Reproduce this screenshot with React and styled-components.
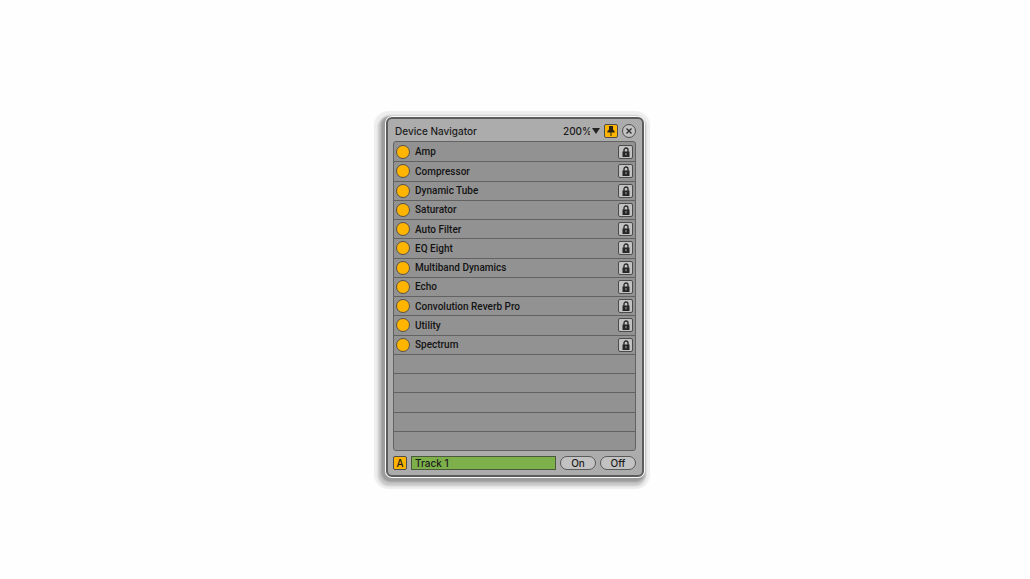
import React from "react";
import styled, { createGlobalStyle } from "styled-components";

const GlobalStyle = createGlobalStyle`
  *, *::before, *::after { box-sizing: border-box; }
  body { margin: 0; background: #fefefe; }
  button, input, select { margin: 0; font: inherit; color: inherit; }
`;

const Page = styled.main`
  display: flex;
  justify-content: center;
  align-items: flex-start;
  min-height: 100vh;
  padding: 117px 16px 32px;
  font: 500 10px/14px Inter, "Liberation Sans", sans-serif;
  color: #1c1c1c;
`;

const Panel = styled.section`
  width: 100%;
  max-width: 258px;
  padding: 4px 6px 5px 5px;
  border: 2px solid #5c5c5c;
  border-radius: 6px;
  background: #acacac;
  box-shadow:
    0 0 0 1px #f8f8f8,
    -2px 2px 2px 3px #9c9c9c,
    -3px 4px 2px 5px #c8c8c8,
    -3px 3px 1px 9px #eeeeee;
`;

const Header = styled.header`
  display: flex;
  align-items: center;
  height: 16px;
  margin-bottom: 2px;
  padding-left: 2px;
`;

const Title = styled.h1`
  flex: 1;
  margin: 0;
  font: inherit;
`;

const ZoomField = styled.label`
  display: flex;
  align-items: center;
  gap: 2px;
  margin-right: 4px;
`;

const ZoomSelect = styled.select`
  appearance: none;
  width: 27px;
  padding: 0;
  border: 0;
  background: none;
`;

const SquareButton = styled.button`
  display: grid;
  place-items: center;
  flex: none;
  width: ${(p) => p.$width || 14}px;
  height: 14px;
  padding: 0;
  border: 1px solid #4c4c4c;
  border-radius: 2px;
  background: ${(p) => (p.$active ? "#ffb400" : "#c2c2c2")};
  line-height: 12px;
`;

const CloseButton = styled(SquareButton)`
  margin-left: 4px;
  border-radius: 50%;
`;

const DeviceList = styled.ul`
  display: grid;
  grid-template-rows: repeat(16, 1fr);
  min-height: 310px;
  margin: 0;
  padding: 0;
  border: 1px solid #626262;
  border-radius: 3px;
  background: #929292;
  font-family: Roboto, "Liberation Sans", sans-serif;
  line-height: 15px;
  color: #141414;
  list-style: none;
`;

const DeviceRow = styled.li`
  display: flex;
  align-items: center;
  padding: 0 2px;
  & + & { border-top: 1px solid #626262; }
`;

const DeviceLabel = styled.label`
  display: flex;
  flex: 1;
  align-items: center;
  gap: 5px;
`;

const DeviceToggle = styled.input`
  appearance: none;
  width: 14px;
  height: 14px;
  border: 1px solid #55524a;
  border-radius: 50%;
  background: #a0a0a0;
  &:checked { background: #ffb400; }
`;

const Footer = styled.footer`
  display: flex;
  align-items: center;
  gap: 4px;
  margin-top: 5px;
`;

const TrackInput = styled.input`
  flex: 1;
  min-width: 0;
  height: 14px;
  padding: 0 3px;
  border: 1px solid #4a5a3a;
  border-radius: 0;
  background: #7db04b;
`;

const PillButton = styled.button`
  width: 36px;
  height: 14px;
  padding: 0;
  border: 1px solid #5a5a5a;
  border-radius: 7px;
  background: #c2c2c2;
  line-height: 12px;
`;

const LockIcon = () => (
  <svg width="8" height="10" viewBox="0 0 8 10" aria-hidden="true">
    <path d="M2 5V3a2 2 0 0 1 4 0v2" fill="none" stroke="#262626" strokeWidth="1.3" />
    <path d="M.5 4.5h7V10h-7z" fill="#262626" />
    <path d="M4 6v2.3" stroke="#a8a8a8" />
  </svg>
);

const PinIcon = () => (
  <svg width="8" height="10" viewBox="0 0 8 10" aria-hidden="true">
    <path d="M2 0h4v3.7L7.6 5v1.6H.4V5L2 3.7zM3.5 6.4h1V10h-1z" fill="#2b2410" />
  </svg>
);

const CloseIcon = () => (
  <svg width="6" height="6" viewBox="0 0 6 6" aria-hidden="true">
    <path d="M.5.5l5 5m0-5l-5 5" stroke="#303030" strokeWidth="1.4" />
  </svg>
);

const CaretIcon = () => (
  <svg width="8" height="6" viewBox="0 0 8 6" aria-hidden="true">
    <path d="M0 0h8L4 6z" fill="#242424" />
  </svg>
);

const devices = [
  "Amp", "Compressor", "Dynamic Tube", "Saturator", "Auto Filter", "EQ Eight",
  "Multiband Dynamics", "Echo", "Convolution Reverb Pro", "Utility", "Spectrum",
];
const emptySlots = [0, 1, 2, 3, 4];

export default function App() {
  return (
    <>
      <GlobalStyle />
      <Page>
        <Panel>
          <Header>
            <Title>Device Navigator</Title>
            <ZoomField>
              <ZoomSelect aria-label="Zoom" defaultValue="200%">
                <option>200%</option>
              </ZoomSelect>
              <CaretIcon />
            </ZoomField>
            <SquareButton $active aria-label="Pin"><PinIcon /></SquareButton>
            <CloseButton aria-label="Close"><CloseIcon /></CloseButton>
          </Header>
          <DeviceList>
            {devices.map((name) => (
              <DeviceRow key={name}>
                <DeviceLabel>
                  <DeviceToggle type="checkbox" defaultChecked />
                  {name}
                </DeviceLabel>
                <SquareButton $width={15} aria-label={`Lock ${name}`}><LockIcon /></SquareButton>
              </DeviceRow>
            ))}
            {emptySlots.map((slot) => <DeviceRow key={slot} />)}
          </DeviceList>
          <Footer>
            <SquareButton $active>A</SquareButton>
            <TrackInput aria-label="Track name" defaultValue="Track 1" />
            <PillButton>On</PillButton>
            <PillButton>Off</PillButton>
          </Footer>
        </Panel>
      </Page>
    </>
  );
}
